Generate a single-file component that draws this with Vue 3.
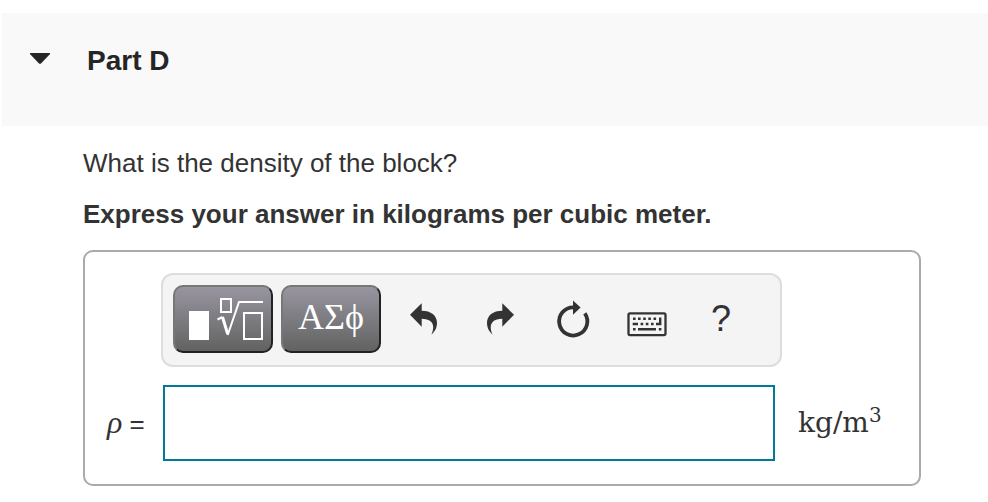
<script setup>
import { ref } from 'vue'

const open = ref(true)
const answer = ref('')
</script>

<template>
  <main class="part">
    <header class="part-header">
      <button
        class="toggle"
        type="button"
        aria-label="Toggle Part D"
        :aria-expanded="open"
        @click="open = !open"
      >
        <svg width="22" height="14" viewBox="0 0 22 14" aria-hidden="true">
          <path d="M1.4 1H20.6Q21.4 1.6 20.8 2.3L12 11.4Q11 12.3 10 11.4L1.2 2.3Q.6 1.6 1.4 1Z" />
        </svg>
      </button>
      <h2>Part D</h2>
    </header>

    <section v-show="open" class="part-body">
      <p class="question">What is the density of the block?</p>
      <p class="instruction">Express your answer in kilograms per cubic meter.</p>

      <form class="answer" @submit.prevent>
        <div class="toolbar" role="toolbar" aria-label="Equation tools">
          <button class="palette" type="button" aria-label="Templates">
            <svg width="96" height="64" viewBox="2 2 96 64" aria-hidden="true">
              <rect x="16" y="26" width="20" height="29" fill="#fff" />
              <g fill="none" stroke="#fff" stroke-width="2">
                <rect x="48" y="14" width="10" height="13" />
                <path d="M44.5 34.5L49.5 32" />
                <path d="M49.5 32L54.7 49" stroke-width="3" />
                <path d="M54.7 50L66 17H90" />
                <rect x="71" y="28" width="18" height="26" />
              </g>
            </svg>
          </button>
          <button class="palette greek" type="button" aria-label="Symbols">ΑΣϕ</button>
          <button class="tool" type="button" aria-label="Undo">
            <svg width="74" height="68" viewBox="0 0 74 68" aria-hidden="true">
              <path d="M23 29.8L34.7 18.3V25.7C44 25.7 50 30.5 50 38C50 43 47.5 47 44.5 49.5C48 42 47 34 34.7 33.8V41.7Z" />
            </svg>
          </button>
          <button class="tool" type="button" aria-label="Redo">
            <svg width="74" height="68" viewBox="0 0 74 68" aria-hidden="true">
              <path d="M53 29.8L41.3 18.3V25.7C32 25.7 26 30.5 26 38C26 43 28.5 47 31.5 49.5C28 42 29 34 41.3 33.8V41.7Z" />
            </svg>
          </button>
          <button class="tool" type="button" aria-label="Reset">
            <svg width="74" height="68" viewBox="0 0 74 68" aria-hidden="true">
              <path d="M38.5 22.3A14.1 14.1 0 1 0 49.8 28.3" fill="none" stroke="#333" stroke-width="3.8" />
              <path d="M38 15.6L45.6 22.6L38 29.8Z" />
            </svg>
          </button>
          <button class="tool" type="button" aria-label="Keyboard shortcuts">
            <svg width="74" height="68" viewBox="0 0 74 68" aria-hidden="true">
              <rect x="19.5" y="28.3" width="37" height="21.8" rx="1.5" fill="none" stroke="#333" stroke-width="2.3" />
              <path d="M24 32.5h2.6v2.4H24zM29 32.5h2.6v2.4H29zM34.2 32.5h2.6v2.4h-2.6zM39.3 32.5h2.6v2.4h-2.6zM44.5 32.5h2.6v2.4h-2.6zM23.7 37.8h5.3v2.4h-5.3zM31.6 37.8h2.6v2.4h-2.6zM36.8 37.8h2.6v2.4h-2.6zM42 37.8h2.6v2.4H42zM50 32.5h2.4v7.7H47v-2.4h3zM24 43h2.6v2.4H24zM29 43h18v2.4H29zM49.8 43h2.6v2.4h-2.6z" />
            </svg>
          </button>
          <button class="tool help" type="button" aria-label="Help">?</button>
        </div>

        <div class="entry">
          <label for="density"><i>ρ</i> =</label>
          <input id="density" v-model="answer" type="text" autocomplete="off" />
          <span class="unit">kg/m<sup>3</sup></span>
        </div>
      </form>
    </section>
  </main>
</template>

<style>
body {
  background: #fff;
}
</style>

<style scoped>
.part {
  padding: 13px 0 16px 2px;
  color: #333;
  font-family: "Liberation Sans", Arial, sans-serif;
  font-size: 26px;
  line-height: 30px;
}

button {
  margin: 0;
  padding: 0;
  color: inherit;
  cursor: pointer;
}

svg {
  display: block;
  fill: #333;
}

.part-header {
  display: flex;
  align-items: flex-start;
  gap: 36px;
  padding: 32px 27px 49px;
  background: #f9f9f9;
  color: #252525;
}

.toggle {
  display: flex;
  align-items: center;
  height: 28px;
  border: 0;
  background: none;
}

.toggle svg {
  fill: #252525;
}

h2 {
  margin: 0;
  font-size: 28px;
  line-height: 32px;
}

.part-body {
  padding: 22px 67px 0 81px;
}

p {
  margin: 0;
}

.instruction {
  margin-top: 21px;
  font-weight: bold;
}

.answer {
  margin-top: 21px;
  padding: 21px 0 23px;
  border: 2px solid #aaa;
  border-radius: 10px;
}

.toolbar {
  display: flex;
  margin: 0 137px 18px 76px;
  padding: 10px 10px 12px;
  border: 2px solid #ddd;
  border-radius: 12px;
  background: #f4f4f4;
}

.palette {
  box-sizing: border-box;
  width: 100px;
  height: 68px;
  margin-right: 8px;
  border: 2px solid;
  border-color: #777 #222 #222 #777;
  border-radius: 10px;
  background: linear-gradient(#9895a0, #626262);
}

.greek {
  margin-right: 6px;
  padding-bottom: 4px;
  color: #fff;
  font-family: "Liberation Serif", serif;
  font-size: 36px;
  line-height: 40px;
}

.tool {
  width: 74px;
  height: 68px;
  border: 0;
  background: none;
}

.help {
  padding-left: 2px;
  font-family: "Liberation Sans", Arial, sans-serif;
  font-size: 36px;
}

.entry {
  display: grid;
  grid-template-columns: 78px 1fr 144px;
  align-items: center;
}

label {
  padding-left: 22px;
}

label i {
  font-family: "Liberation Serif", serif;
  font-size: 32px;
}

input {
  box-sizing: border-box;
  width: 100%;
  min-width: 0;
  height: 76px;
  padding: 0 16px;
  border: 2px solid #007a99;
  border-radius: 0;
  outline: 0;
  background: #fff;
  color: inherit;
  font: inherit;
}

.unit {
  padding-left: 23px;
  font-family: "DejaVu Serif", serif;
  font-size: 28px;
  white-space: nowrap;
}

sup {
  font-size: 20px;
  line-height: 0;
}
</style>
